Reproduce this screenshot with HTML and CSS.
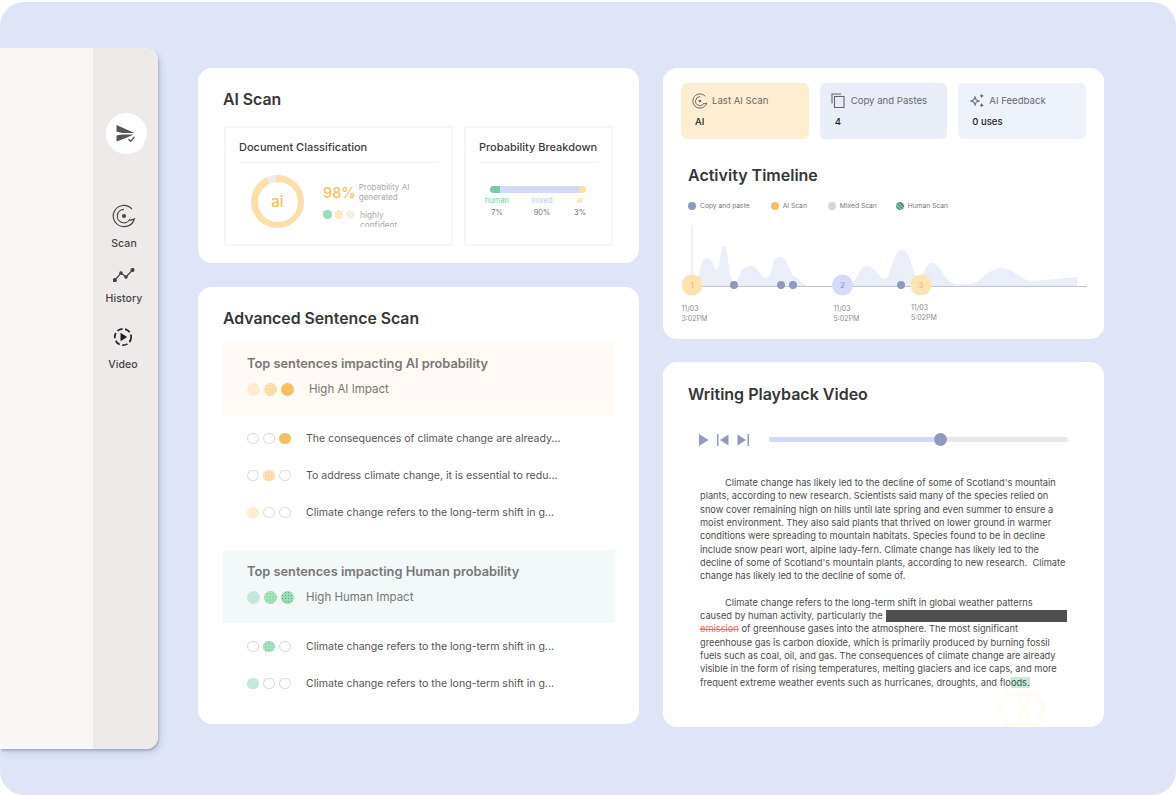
FILE: index.html
```html
<!DOCTYPE html>
<html lang="en">
<head>
<meta charset="utf-8">
<title>Scan report</title>
<link rel="stylesheet" href="styles.css">
</head>
<body>
<main class="stage">
  <aside class="sidebar">
    <div class="sidebar-blank"></div>
    <nav class="rail">
      <div class="send">
        <svg width="20" height="18" viewBox="0 0 20 18"><path d="M.5 0 L18.5 8 H6 L.5 6.5Z M.5 16.5 V10.5 L6 9.5 H17.5 L10 13Z" fill="#555"/><path d="M12.5 14.2l2 2 4-4.2" fill="none" stroke="#555" stroke-width="1.3"/></svg>
      </div>
      <div class="nav-item nav-scan">
        <svg width="24" height="24" viewBox="0 0 24 24" fill="none" stroke="#444" stroke-width="1.2"><path d="M20 5.2A10.6 10.6 0 1 0 12 22.6c5 0 9-3 10.3-7.6l-4.2 1.4"/><path d="M12 5.4a6.7 6.7 0 1 0 6.1 9.6"/><circle cx="12" cy="12" r="2" fill="#444" stroke="none"/></svg>
        <span>Scan</span>
      </div>
      <div class="nav-item nav-history">
        <svg width="22" height="14" viewBox="0 0 22 14" fill="none" stroke="#444" stroke-width="1.2"><path d="M1.5 12.5 L8 5 L13 9 L19.5 2"/><circle cx="1.8" cy="12.2" r="1.5" fill="#444"/><circle cx="8" cy="5" r="1.2" fill="#444"/><circle cx="13" cy="9" r="1.2" fill="#444"/><circle cx="19.5" cy="2" r="1.5" fill="#444"/></svg>
        <span>History</span>
      </div>
      <div class="nav-item nav-video">
        <svg width="20" height="20" viewBox="0 0 20 20"><circle cx="10" cy="10" r="8.2" fill="none" stroke="#222" stroke-width="1.7" stroke-dasharray="5.5 2.6"/><path d="M7.5 5.8 L14.2 10 L7.5 14.2Z" fill="#222"/></svg>
        <span>Video</span>
      </div>
    </nav>
  </aside>

  <div class="column">
    <section class="card card-scan">
      <h2 class="card-title">AI Scan</h2>
      <div class="scan-panels">
        <div class="panel panel-doc">
          <h3 class="panel-title">Document Classification</h3>
          <div class="doc-body">
            <div class="donut"><span>ai</span></div>
            <div class="doc-info">
              <div class="doc-top">
                <span class="pct">98%</span>
                <span class="pct-note">Probability AI generated</span>
              </div>
              <div class="doc-bottom">
                <span class="tiny-dots">
                  <i class="td td-green"></i><i class="td td-hatch"></i><i class="td td-hatch2"></i>
                </span>
                <span class="confident">highly confident</span>
              </div>
            </div>
          </div>
        </div>
        <div class="panel panel-prob">
          <h3 class="panel-title">Probability Breakdown</h3>
          <div class="prob-bar"><i class="pb-human"></i><i class="pb-mixed"></i><i class="pb-ai"></i></div>
          <div class="prob-legend">
            <div class="pl pl-human"><b>human</b><span>7%</span></div>
            <div class="pl pl-mixed"><b>mixed</b><span>90%</span></div>
            <div class="pl pl-ai"><b>ai</b><span>3%</span></div>
          </div>
        </div>
      </div>
    </section>

    <section class="card card-sentences">
      <h2 class="card-title">Advanced Sentence Scan</h2>
      <div class="band band-ai">
        <h4 class="band-title">Top sentences impacting AI probability</h4>
        <div class="band-row">
          <span class="dots big"><i class="o1"></i><i class="o2"></i><i class="o3"></i></span>
          <span class="band-label">High AI Impact</span>
        </div>
      </div>
      <ul class="rows">
        <li><span class="dots"><i class="e"></i><i class="e"></i><i class="o3"></i></span><span class="row-text">The consequences of climate change are already...</span></li>
        <li><span class="dots"><i class="e"></i><i class="o2"></i><i class="e"></i></span><span class="row-text">To address climate change, it is essential to redu...</span></li>
        <li><span class="dots"><i class="o1"></i><i class="e"></i><i class="e"></i></span><span class="row-text">Climate change refers to the long-term shift in g...</span></li>
      </ul>
      <div class="band band-human">
        <h4 class="band-title">Top sentences impacting Human probability</h4>
        <div class="band-row">
          <span class="dots big"><i class="g1"></i><i class="g2"></i><i class="g3"></i></span>
          <span class="band-label tight">High Human Impact</span>
        </div>
      </div>
      <ul class="rows">
        <li><span class="dots"><i class="e"></i><i class="g2"></i><i class="e"></i></span><span class="row-text">Climate change refers to the long-term shift in g...</span></li>
        <li><span class="dots"><i class="g1"></i><i class="e"></i><i class="e"></i></span><span class="row-text">Climate change refers to the long-term shift in g...</span></li>
      </ul>
    </section>
  </div>

  <div class="column">
    <section class="card card-activity">
      <div class="tiles">
        <div class="tile tile-ai">
          <div class="tile-head">
            <svg width="16" height="16" viewBox="0 0 24 24" fill="none" stroke="#666" stroke-width="1.5"><path d="M20 5.2A10.6 10.6 0 1 0 12 22.6c5 0 9-3 10.3-7.6l-4.2 1.4"/><path d="M12 5.4a6.7 6.7 0 1 0 6.1 9.6"/><circle cx="12" cy="12" r="2" fill="#666" stroke="none"/></svg>
            <span>Last AI Scan</span>
          </div>
          <div class="tile-val">AI</div>
        </div>
        <div class="tile tile-copy">
          <div class="tile-head">
            <svg width="14" height="15" viewBox="0 0 14 15" fill="none" stroke="#666" stroke-width="1.1"><path d="M1 10.5V1h9"/><rect x="3.5" y="3.5" width="9.5" height="11"/></svg>
            <span>Copy and Pastes</span>
          </div>
          <div class="tile-val">4</div>
        </div>
        <div class="tile tile-feedback">
          <div class="tile-head">
            <svg width="16" height="15" viewBox="0 0 16 15" fill="#666"><path d="M6 2.5 L7.6 6.4 L11.5 8 L7.6 9.6 L6 13.5 L4.4 9.6 L.5 8 L4.4 6.4Z M6 5.2 L5.2 7.2 L3.2 8 L5.2 8.8 L6 10.8 L6.8 8.8 L8.8 8 L6.8 7.2Z" fill-rule="evenodd"/><path d="M12.7 .5l.7 1.7 1.7.7-1.7.7-.7 1.7-.7-1.7-1.7-.7 1.7-.7Z"/><path d="M12.7 10l.7 1.6 1.6.7-1.6.7-.7 1.6-.7-1.6-1.6-.7 1.6-.7Z"/></svg>
            <span>AI Feedback</span>
          </div>
          <div class="tile-val">0 uses</div>
        </div>
      </div>
      <h2 class="card-title timeline-title">Activity Timeline</h2>
      <div class="legend">
        <span class="lg"><i class="lg-copy"></i>Copy and paste</span>
        <span class="lg"><i class="lg-ai"></i>AI Scan</span>
        <span class="lg"><i class="lg-mixed"></i>Mixed Scan</span>
        <span class="lg lg-last"><i class="lg-human"></i>Human Scan</span>
      </div>
      <svg class="chart" width="441" height="110" viewBox="663 222 441 110">
        <path fill="#e9eef9" d="M697 286 C700 270 702 258 707 258 C713 258 714 270 717 270 C720 270 720 246 724 246 C729 246 727 274 733 281 C737 285 738 278 741 272 C745 265 755 263 759 272 C762 278 766 280 769 276 C773 270 772 257 780 257 C788 257 788 272 795 277 C800 281 805 285 809 286Z"/>
        <path fill="#e9eef9" d="M850 286 C857 280 860 266 867 266 C875 266 880 279 885 279 C891 279 892 250 902 250 C912 250 911 276 919 280 C925 276 924 263 932 263 C941 263 944 284 957 284 C965 284 973 284 978 281 C984 276 992 268 1002 268 C1012 268 1022 281 1032 281 L1077 277 L1077 286Z"/>
        <line x1="692" y1="225" x2="692" y2="286" stroke="#e2e2e4" stroke-width="1"/>
        <line x1="692" y1="286.5" x2="1087" y2="286.5" stroke="#c4c5cc" stroke-width="1"/>
        <circle cx="734" cy="285" r="4" fill="#9199bf"/>
        <circle cx="781" cy="285" r="4" fill="#9199bf"/>
        <circle cx="793" cy="285" r="4" fill="#9199bf"/>
        <circle cx="901" cy="285" r="4" fill="#9199bf"/>
        <circle cx="692" cy="285" r="10.5" fill="#fde3b2"/>
        <circle cx="842.5" cy="285" r="10.5" fill="#d5dbf8"/>
        <circle cx="921" cy="285" r="10.5" fill="#fde3b2"/>
        <text class="mark mark-o" x="692" y="288">1</text>
        <text class="mark mark-b" x="842.5" y="288">2</text>
        <text class="mark mark-o" x="921" y="288">3</text>
        <text class="stamp" x="681.5" y="311">11/03</text>
        <text class="stamp" x="681.5" y="321">3:02PM</text>
        <text class="stamp" x="833.5" y="311">11/03</text>
        <text class="stamp" x="833.5" y="321">5:02PM</text>
        <text class="stamp" x="911" y="310">11/03</text>
        <text class="stamp" x="911" y="320">5:02PM</text>
      </svg>
    </section>

    <section class="card card-video">
      <h2 class="card-title">Writing Playback Video</h2>
      <div class="player">
        <div class="controls">
          <svg width="10" height="12" viewBox="0 0 10 12"><path d="M0 0 L9.5 6 L0 12Z" fill="#9199bf"/></svg>
          <svg width="12" height="12" viewBox="0 0 12 12" fill="#9199bf"><rect width="1.5" height="12"/><path d="M11.5 .5 V11.5 L3 6Z"/></svg>
          <svg width="12" height="12" viewBox="0 0 12 12" fill="#9199bf"><path d="M.5 .5 V11.5 L9 6Z"/><rect x="10.5" width="1.5" height="12"/></svg>
        </div>
        <div class="track"><div class="track-fill"></div><i class="thumb"></i></div>
      </div>
      <div class="doc-text">
        <p><span class="indent"></span>Climate change has likely led to the decline of some of Scotland's mountain<br>plants, according to new research. Scientists said many of the species relied on<br>snow cover remaining high on hills until late spring and even summer to ensure a<br>moist environment. They also said plants that thrived on lower ground in warmer<br>conditions were spreading to mountain habitats. Species found to be in decline<br>include snow pearl wort, alpine lady-fern. Climate change has likely led to the<br>decline of some of Scotland's mountain plants, according to new research.&nbsp; Climate<br>change has likely led to the decline of some of.</p>
        <p><span class="indent"></span>Climate change refers to the long-term shift in global weather patterns<br>caused by human activity, particularly the <span class="redact"></span><br><span class="strike">emission</span> of greenhouse gases into the atmosphere. The most significant<br>greenhouse gas is carbon dioxide, which is primarily produced by burning fossil<br>fuels such as coal, oil, and gas. The consequences of climate change are already<br>visible in the form of rising temperatures, melting glaciers and ice caps, and more<br>frequent extreme weather events such as hurricanes, droughts, and flo<span class="mark-green">ods.</span></p>
      </div>
      <svg class="deco" width="52" height="38" viewBox="0 0 52 38" fill="none" stroke="#fefdf5" stroke-width="6"><path d="M6 4 H44 M14 4 L4 18 L14 36 M38 4 L48 18 L40 36 M10 36 H44 M22 4 L34 36 M34 4 L22 36"/></svg>
    </section>
  </div>
</main>
</body>
</html>
```
FILE: styles.css
```css
* { box-sizing: border-box; }
html, body { margin: 0; padding: 0; background: #fff; }
body { font-family: "Inter", "Liberation Sans", sans-serif; color: #333; padding-top: 2px; }
.stage {
  width: 1176px; height: 793px;
  background: #dfe5f7;
  border-radius: 24px;
  display: flex; align-items: flex-start;
  gap: 24px;
  overflow: hidden;
}
i { display: block; font-style: normal; }
h2, h3, h4, p, ul { margin: 0; padding: 0; }
ul { list-style: none; }

/* sidebar */
.sidebar {
  width: 158px; height: 701px;
  margin: 46px 16px 0 0;
  display: flex;
  background: #f8f7f5;
  border-radius: 0 12px 12px 0;
  box-shadow: 1px 2px 2px rgba(100,105,120,.35), 3px 4px 6px rgba(130,145,190,.25);
  overflow: hidden;
  flex: none;
}
.sidebar-blank { width: 93px; }
.rail {
  flex: 1; background: #eeeaea;
  display: flex; flex-direction: column; align-items: center;
  padding-top: 65px;
}
.send {
  width: 41px; height: 41px; border-radius: 50%;
  background: #fff;
  display: flex; align-items: center; justify-content: center;
  margin: 0 0 0 1px;
}
.nav-item { display: flex; flex-direction: column; align-items: center; font-size: 10.5px; font-weight: 500; color: #444; line-height: 13px; letter-spacing: .1px; }
.nav-scan { margin-top: 50px; margin-left: -3px; gap: 9px; }
.nav-history { margin-top: 18px; margin-left: -3px; gap: 10px; }
.nav-video { margin-top: 22px; margin-left: -5px; gap: 11px; }

/* columns / cards */
.column { width: 441px; display: flex; flex-direction: column; flex: none; padding-top: 66px; }
.card { background: #fff; border-radius: 14px; position: relative; }
.card-title { font-size: 16px; font-weight: 600; color: #363636; line-height: 20px; }
.card-scan .card-title, .card-sentences .card-title { font-size: 15.8px; }
.card-scan { height: 195px; padding: 22px 26px 0 26px; }
.card-scan .card-title { margin-left: -1px; }
.card-sentences { height: 437px; margin-top: 24px; padding: 22px 24px 0 25px; }
.card-activity { height: 271px; padding: 15px 18px 0 18px; }
.card-video { height: 365px; margin-top: 23px; padding: 22px 25px 0 25px; overflow: hidden; }

/* AI scan */
.scan-panels { display: flex; gap: 11px; margin-top: 16px; }
.panel { border: 2px solid #f6f6f8; height: 120px; padding: 12px 13px 0; }
.panel-doc { width: 229px; }
.panel-prob { width: 149px; }
.panel-title { font-size: 11px; font-weight: 500; color: #3c3c3c; line-height: 14px; padding-bottom: 8px; border-bottom: 1px solid #f1f1f3; white-space: nowrap; }
.doc-body { display: flex; padding: 12px 0 0 12px; }
.donut {
  width: 53px; height: 53px; border-radius: 50%;
  background: conic-gradient(#fbdfa9 0 93%, #f0ebe6 93% 99%, #fbdfa9 99%);
  display: flex; align-items: center; justify-content: center;
  position: relative; flex: none;
}
.donut::before { content: ""; position: absolute; inset: 6.5px; background: #fff; border-radius: 50%; }
.donut span { position: relative; font-size: 15px; font-weight: 500; color: #f5c062; }
.doc-info { margin-left: 19px; width: 100px; }
.doc-top { display: flex; align-items: center; gap: 3px; margin-top: 7px; }
.pct { font-size: 14.5px; font-weight: 500; color: #f5c062; }
.pct-note { font-size: 8.1px; line-height: 10px; color: #a9a9a9; width: 60px; }
.doc-bottom { display: flex; margin-top: 7px; height: 18px; overflow: hidden; }
.tiny-dots { display: flex; gap: 3px; margin-top: 1px; width: 37px; flex: none; }
.td { width: 8.5px; height: 8.5px; border-radius: 50%; }
.td-green { background: #9ddcb8; }
.td-hatch { background: #fbe4bd repeating-linear-gradient(45deg, #fdf1dc 0 1px, transparent 1px 3px); }
.td-hatch2 { background: #f3ece2 repeating-linear-gradient(45deg, #fbf8f3 0 1px, transparent 1px 3px); }
.confident { font-size: 8.3px; line-height: 10px; color: #a9a9a9; width: 40px; margin-top: 1px; }

.prob-bar { display: flex; height: 7px; margin: 23px 12px 0 11px; }
.prob-bar i { height: 7px; }
.pb-human { width: 10px; border-radius: 4px 0 0 4px; background: #9ddcb8 radial-gradient(circle, #5fae86 .6px, transparent .8px) 0 0 / 2px 2px; }
.pb-mixed { flex: 1; background: #d2d9f9; }
.pb-ai { width: 7px; background: #fbdfa9; border-radius: 0 4px 4px 0; }
.prob-legend { position: relative; height: 28px; margin-top: 2px; }
.pl { position: absolute; top: 0; display: flex; flex-direction: column; align-items: center; font-size: 7.5px; line-height: 12px; width: 40px; color: #777; }
.pl b { font-weight: 400; }
.pl-human { left: -2px; } .pl-human b { color: #79d09f; }
.pl-mixed { left: 43px; } .pl-mixed b { color: #c2c9f0; }
.pl-ai { left: 81px; } .pl-ai b { color: #f6d08e; }

/* bands */
.band { height: 73px; padding: 13px 24px 0; margin-top: 13px; }
.card-sentences .band-human { margin-top: 19px; }
.band-ai { background: #fffaf3; }
.band-human { background: #f3f9f8; }
.band-title { font-size: 12.8px; font-weight: 600; color: #777; line-height: 18px; white-space: nowrap; }
.band-row { display: flex; align-items: center; margin-top: 8px; height: 16px; }
.band-label { font-size: 11.5px; color: #777; margin-left: 15px; }
.band-label.tight { margin-left: 12px; }
.dots { display: flex; gap: 4.5px; flex: none; }
.dots i { width: 11.5px; height: 11.5px; border-radius: 50%; }
.dots.big { gap: 4px; }
.dots.big i { width: 13px; height: 13px; }
.o1 { background: #fdecce; }
.o2 { background: #fbdba5 radial-gradient(circle, #fdeed2 .7px, transparent .9px) 0 0 / 3px 3px; }
.o3 { background: #f5c062; }
.g1 { background: #c5e7dc; }
.g2 { background: #9adcb5 radial-gradient(circle, #c4eed6 .7px, transparent .9px) 0 0 / 3px 3px; }
.g3 { background: #9adcb5 radial-gradient(circle, #5fa583 .6px, transparent .8px) 0 0 / 3px 3px; }
.dots .e { background: #fff; border: 1px solid #d8d8d8; }

.rows { padding: 5px 0 0 24px; }
.rows li { display: flex; align-items: center; height: 37px; }
.row-text { font-size: 10.55px; color: #555; margin-left: 15.5px; white-space: nowrap; }

/* tiles */
.tiles { display: flex; gap: 11px; }
.tile { width: 128px; height: 56px; border-radius: 6px; padding: 10px 0 0 11px; }
.tile-ai { background: #feeed1; }
.tile-copy { background: #e9edf7; }
.tile-feedback { background: #eef2fa; }
.tile-head { display: flex; align-items: center; gap: 4px; font-size: 9.6px; color: #6a6a6a; height: 15px; }
.tile-val { font-size: 9.5px; font-weight: 500; color: #222; margin-top: 8px; padding-left: 3px; line-height: 11px; }
.tile-copy .tile-head { gap: 6px; }
.tile-copy .tile-val { padding-left: 4px; }
.tile-feedback .tile-val { padding-left: 3px; }
.timeline-title { margin: 26px 0 0 7px; }
.legend { display: flex; margin: 16px 0 0 7px; font-size: 6.7px; color: #777; gap: 21px; }
.lg { display: flex; align-items: center; gap: 4px; height: 9px; }
.lg-last { margin-left: -2px; }
.lg i { width: 8px; height: 8px; border-radius: 50%; }
.lg-copy { background: #9199bf; }
.lg-ai { background: #f5c062; }
.lg-mixed { background: #d5d7e3; }
.lg-human { background: #7fb79c repeating-linear-gradient(45deg, #4f8a6e 0 1px, transparent 1px 2.5px); }
.chart { position: absolute; left: 0; top: 154px; font-family: "Inter", "Liberation Sans", sans-serif; }
.mark { font-size: 7.5px; text-anchor: middle; }
.mark-o { fill: #f0b850; }
.mark-b { fill: #8a90b8; }
.stamp { font-size: 7px; fill: #8c8c8c; }

/* video */
.player { display: flex; align-items: center; margin-top: 28px; height: 14px; }
.controls { display: flex; gap: 8px; padding-left: 11px; width: 81px; flex: none; margin-top: 1px; }
.track { width: 299px; height: 5px; background: #e8e8e8; border-radius: 3px; position: relative; }
.track-fill { width: 171px; height: 5px; background: #d2d9fb; border-radius: 3px; }
.thumb { position: absolute; left: 165px; top: -4px; width: 13px; height: 13px; border-radius: 50%; background: #9199bf; }
.doc-text { margin: 30px 0 0 12px; font-size: 9.28px; line-height: 13.35px; color: #4c4c4c; white-space: nowrap; }
.doc-text p + p { margin-top: 13px; }
.indent { display: inline-block; width: 25px; }
.redact { display: inline-block; width: 181px; height: 12px; background: #505050; vertical-align: -3px; margin-left: 1px; }
.strike { color: #f0705f; text-decoration: line-through; }
.mark-green { background: #c3ecd6; }
.deco { position: absolute; left: 333px; top: 327px; }
```
